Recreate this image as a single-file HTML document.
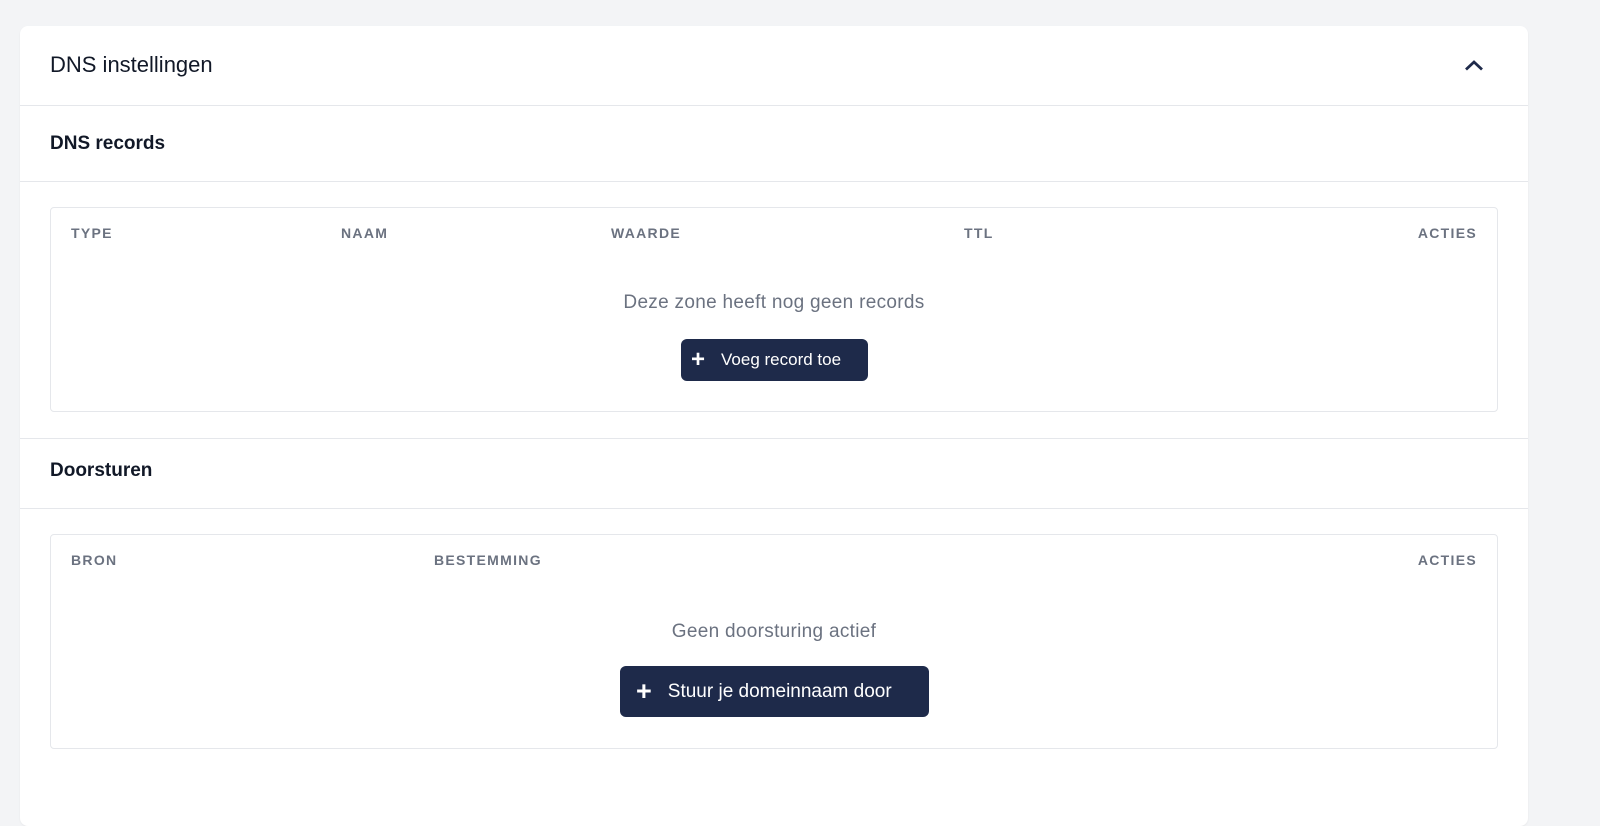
<!DOCTYPE html>
<html><head><style>
*{box-sizing:border-box;margin:0;padding:0}
body{width:1600px;height:781px;overflow:hidden;background:#f3f4f6;font-family:"Liberation Sans",Arial,sans-serif;position:relative}
.card{position:absolute;left:20px;top:26px;width:1508px;height:800px;background:#fff;border-radius:8px;box-shadow:0 1px 2px rgba(0,0,0,.05)}
.abs{position:absolute}
.line{position:absolute;left:0;right:0;height:1px;background:#e5e7eb}
.h1{left:30px;top:26px;font-size:22px;color:#111827}
.h2{left:30px;font-size:19px;font-weight:bold;color:#111827}
.box{position:absolute;left:30px;width:1448px;border:1px solid #e5e7eb;border-radius:4px}
.th{position:absolute;top:17px;font-size:14px;font-weight:bold;letter-spacing:1.3px;color:#6b7280}
.empty{position:absolute;left:0;right:0;text-align:center;font-size:19px;letter-spacing:0.3px;color:#6b7280}
.btn{position:absolute;background:#1e2a4a;color:#fff;border-radius:6px;font-size:17px;display:flex;align-items:center}
</style></head><body>
<div class="card">
<div class="abs h1">DNS instellingen</div>
<svg class="abs" style="left:1444px;top:32px" width="20" height="14" viewBox="0 0 20 14"><path d="M2 11.5 L10 4 L18 11.5" fill="none" stroke="#1e2a4a" stroke-width="2.8"/></svg>
<div class="line" style="top:79px"></div>
<div class="abs h2" style="top:107px">DNS records</div>
<div class="line" style="top:155px"></div>
<div class="box" style="top:181px;height:205px">
<div class="th" style="left:20px">TYPE</div>
<div class="th" style="left:290px">NAAM</div>
<div class="th" style="left:560px">WAARDE</div>
<div class="th" style="left:913px">TTL</div>
<div class="th" style="right:20px">ACTIES</div>
<div class="empty" style="top:84px">Deze zone heeft nog geen records</div>
<div class="btn" style="left:630px;top:131px;width:187px;height:42px"><span style="font-size:24px;margin-left:10px;font-weight:bold">+</span><span style="margin-left:16px">Voeg record toe</span></div>
</div>
<div class="line" style="top:412px"></div>
<div class="abs h2" style="top:434px">Doorsturen</div>
<div class="line" style="top:482px"></div>
<div class="box" style="top:508px;height:215px">
<div class="th" style="left:20px">BRON</div>
<div class="th" style="left:383px">BESTEMMING</div>
<div class="th" style="right:20px">ACTIES</div>
<div class="empty" style="top:86px">Geen doorsturing actief</div>
<div class="btn" style="left:569px;top:131px;width:309px;height:51px;font-size:19px"><span style="font-size:27px;margin-left:16px;font-weight:bold">+</span><span style="margin-left:16px">Stuur je domeinnaam door</span></div>
</div>
</div>
</body></html>
